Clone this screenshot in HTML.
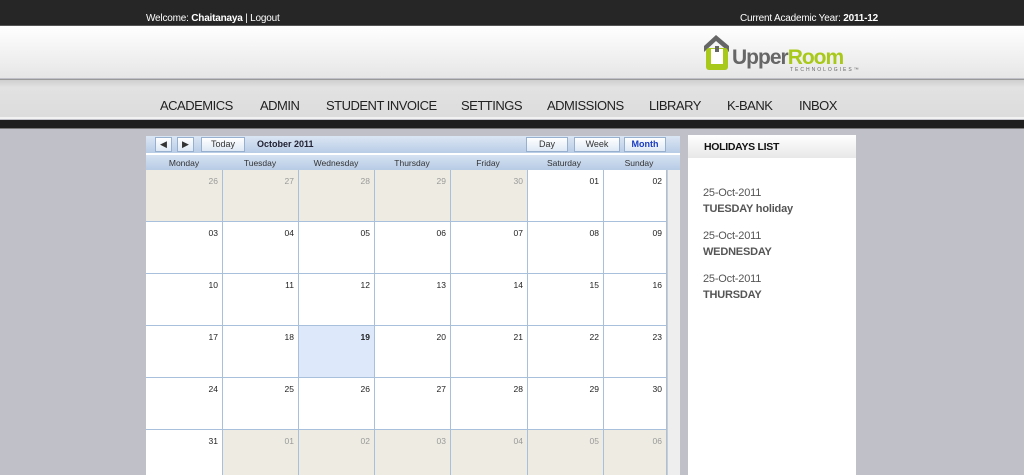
<!DOCTYPE html>
<html><head><style>
*{margin:0;padding:0;box-sizing:border-box}
body{width:1024px;height:475px;overflow:hidden;background:#c0c0c8;font-family:"Liberation Sans",sans-serif;position:relative}
.top{position:absolute;left:0;top:0;width:1024px;height:26px;background:#262626;border-bottom:1px solid #555;color:#fff;font-size:10px;letter-spacing:-0.2px}
.hdr{position:absolute;left:0;top:26px;width:1024px;height:52px;background:linear-gradient(#fff,#e6e6e6)}
.nav{position:absolute;left:0;top:79px;width:1024px;height:40px;background:linear-gradient(#cfcfcf,#e2e2e2 20%,#dcdcdc);border-top:1px solid #999;border-bottom:2px solid #f2f2f2}
.nav span{position:absolute;top:18px;font-size:13px;color:#222;letter-spacing:-0.5px}
.band{position:absolute;left:0;top:120px;width:1024px;height:9px;background:#1e1e1e;border-bottom:1px solid #777}
.cal{position:absolute;left:146px;top:136px;width:534px;height:339px;background:#fff;overflow:hidden}
.tb{position:absolute;left:0;top:0;width:534px;height:17px;background:linear-gradient(#dbe6f4,#b8cce6)}
.btn{position:absolute;top:1px;height:15px;background:linear-gradient(#fff,#dde8f5);border:1px solid #98b0d0;font-size:9px;color:#333;text-align:center;line-height:13px}
.dh{position:absolute;left:0;top:19px;width:534px;height:15px;background:linear-gradient(#d5e2f2,#b7cbe5);font-size:8.5px;color:#333}
.dh span{position:absolute;top:3px;width:76px;text-align:center}
.cell{position:absolute;border-right:1px solid #a8c0dc;border-bottom:1px solid #a8c0dc;font-size:8.5px;color:#222;text-align:right;padding:6px 4px 0 0}
.o{background:#eeece2;color:#999}
.sb{position:absolute;left:521px;top:34px;width:13px;height:305px;background:#eee;border-left:1px solid #ccc}
.panel{position:absolute;left:688px;top:135px;width:168px;height:340px;background:#fff;border-radius:4px 4px 0 0}
.ph{height:23px;background:linear-gradient(#fff,#e8e8e8);font-size:10.5px;font-weight:bold;padding:6px 0 0 16px;color:#111;letter-spacing:-0.3px}
.hl{position:absolute;left:15px;font-size:11px;color:#555;letter-spacing:-0.2px}
</style></head><body>
<div class="top"><span style="position:absolute;left:146px;top:13px">Welcome: <b>Chaitanaya</b> | Logout</span><span style="position:absolute;left:740px;top:13px">Current Academic Year: <b>2011-12</b></span></div>
<div class="hdr">
<svg style="position:absolute;left:702px;top:6px" width="30" height="40" viewBox="0 0 30 40"><path d="M2 14 L14 3 L27 14 L27 20 L14 9 L2 20Z" fill="#666"/><rect x="4" y="16" width="22" height="22" rx="3" fill="#a8c81a"/><rect x="9" y="17" width="12" height="15" fill="#fff"/><rect x="13" y="14" width="4" height="6" fill="#666"/></svg>
<span style="position:absolute;left:732px;top:20px;font-size:21px;font-weight:bold;color:#666;letter-spacing:-1px">Upper<span style="color:#a8c81a">Room</span></span>
<span style="position:absolute;left:790px;top:41px;font-size:5px;color:#666;letter-spacing:2px">TECHNOLOGIES™</span>
</div>
<div class="nav"><span style="left:160px">ACADEMICS</span><span style="left:260px">ADMIN</span><span style="left:326px">STUDENT INVOICE</span><span style="left:461px">SETTINGS</span><span style="left:547px">ADMISSIONS</span><span style="left:649px">LIBRARY</span><span style="left:727px">K-BANK</span><span style="left:799px">INBOX</span></div>
<div class="band"></div>
<div class="cal">
<div class="tb">
<div class="btn" style="left:9px;width:17px">◀</div><div class="btn" style="left:31px;width:17px">▶</div><div class="btn" style="left:55px;width:44px">Today</div>
<span style="position:absolute;left:111px;top:3px;font-size:9px;font-weight:bold;color:#223">October 2011</span>
<div class="btn" style="left:380px;width:42px">Day</div><div class="btn" style="left:428px;width:46px">Week</div><div class="btn" style="left:478px;width:42px;color:#1a3cc0;font-weight:bold">Month</div>
</div>
<div class="dh"><span style="left:0">Monday</span><span style="left:76px">Tuesday</span><span style="left:152px">Wednesday</span><span style="left:228px">Thursday</span><span style="left:304px">Friday</span><span style="left:380px">Saturday</span><span style="left:452px;width:82px">Sunday</span></div>
<div id="g"></div>
<div class="sb"></div>
</div>
<div class="panel"><div class="ph">HOLIDAYS LIST</div>
<div class="hl" style="top:52px">25-Oct-2011</div><div class="hl" style="top:68px;font-weight:bold">TUESDAY holiday</div>
<div class="hl" style="top:95px">25-Oct-2011</div><div class="hl" style="top:111px;font-weight:bold">WEDNESDAY</div>
<div class="hl" style="top:138px">25-Oct-2011</div><div class="hl" style="top:154px;font-weight:bold">THURSDAY</div>
</div>
<script>
var xs=[0,77,153,229,305,382,458,521],h='',d=[26,27,28,29,30,1,2];
for(var r=0;r<6;r++)for(var c=0;c<7;c++){var n=r==0?d[c]:(r*7+c-4);var o=r==0&&c<5;if(n>31){n-=31;o=true}var bg=(r==3&&c==2)?'background:#dde9fb;font-weight:bold;':'';h+='<div class="cell'+(o?' o':'')+'" style="left:'+xs[c]+'px;top:'+(34+r*52)+'px;width:'+(xs[c+1]-xs[c])+'px;height:52px;'+bg+'">'+(n<10?'0'+n:n)+'</div>';}
document.getElementById('g').innerHTML=h;
</script>
</body></html>
